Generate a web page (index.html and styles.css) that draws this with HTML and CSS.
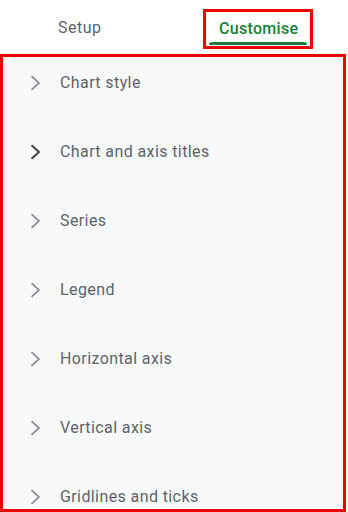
FILE: index.html
```html
<!DOCTYPE html>
<html>
<head>
<meta charset="utf-8">
<link rel="stylesheet" href="styles.css">
</head>
<body>
<div class="tabs">
  <div class="tab">Setup</div>
  <div class="tab tab-active"><span class="tab-label">Customise</span><span class="tab-bar"></span></div>
</div>
<div class="panel">
  <div class="row"><svg class="chev" viewBox="0 0 11 16"><path d="M1.5 1.2 L9 8 L1.5 14.8"/></svg><span class="label">Chart style</span></div>
  <div class="row row-dark"><svg class="chev" viewBox="0 0 11 16"><path d="M1.5 1.2 L9 8 L1.5 14.8"/></svg><span class="label">Chart and axis titles</span></div>
  <div class="row"><svg class="chev" viewBox="0 0 11 16"><path d="M1.5 1.2 L9 8 L1.5 14.8"/></svg><span class="label">Series</span></div>
  <div class="row"><svg class="chev" viewBox="0 0 11 16"><path d="M1.5 1.2 L9 8 L1.5 14.8"/></svg><span class="label">Legend</span></div>
  <div class="row"><svg class="chev" viewBox="0 0 11 16"><path d="M1.5 1.2 L9 8 L1.5 14.8"/></svg><span class="label">Horizontal axis</span></div>
  <div class="row"><svg class="chev" viewBox="0 0 11 16"><path d="M1.5 1.2 L9 8 L1.5 14.8"/></svg><span class="label">Vertical axis</span></div>
  <div class="row"><svg class="chev" viewBox="0 0 11 16"><path d="M1.5 1.2 L9 8 L1.5 14.8"/></svg><span class="label">Gridlines and ticks</span></div>
</div>
</body>
</html>
```
FILE: styles.css
```css
html, body {
  margin: 0;
  padding: 0;
  background: #ffffff;
  font-family: Roboto, "Open Sans", "Liberation Sans", sans-serif;
  width: 348px;
  height: 512px;
  overflow: hidden;
}
.tabs {
  height: 54px;
  position: relative;
}
.tab {
  position: absolute;
  top: 18px;
  left: 58px;
  font-size: 16px;
  letter-spacing: 0.5px;
  color: #5f6368;
}
.tab-active {
  top: 9px;
  left: 203px;
  width: 104px;
  height: 34px;
  border: 3px solid #f00000;
  color: #188038;
  font-weight: 500;
  letter-spacing: 0.3px;
}
.tab-label {
  position: absolute;
  left: 13px;
  top: 7px;
}
.tab-bar {
  position: absolute;
  left: 3px;
  right: 3px;
  bottom: 1px;
  height: 3px;
  border-radius: 3px 3px 0 0;
  background: #188038;
}
.panel {
  width: 346px;
  height: 458px;
  border: 3px solid #f00000;
  background: #f8f9fa;
  padding-top: 14px;
  box-sizing: border-box;
  overflow: hidden;
}
.row {
  height: 69px;
  display: flex;
  align-items: flex-start;
  padding-left: 27px;
}
.chev {
  width: 11px;
  height: 16px;
  margin-top: 4px;
  flex: none;
  fill: none;
  stroke: #898d92;
  stroke-width: 1.7;
}
.row-dark .chev {
  stroke: #3c4043;
  stroke-width: 1.9;
}
.label {
  margin-left: 19px;
  font-size: 16px;
  letter-spacing: 0.4px;
  color: #5f6368;
  line-height: 24px;
}
```
